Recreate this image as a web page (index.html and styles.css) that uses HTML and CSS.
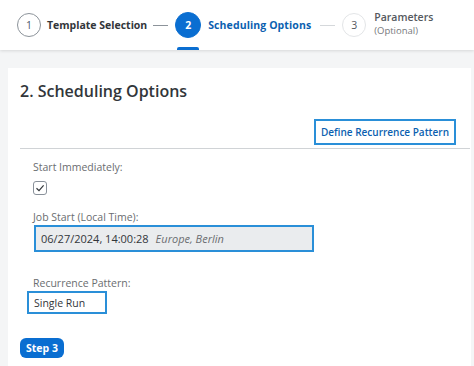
FILE: index.html
```html
<!DOCTYPE html>
<html lang="en">
<head>
    <meta charset="UTF-8">
    <meta name="viewport" content="width=device-width, initial-scale=1.0">
    <title>Scheduling Options</title>
    <link rel="stylesheet" href="styles.css">
</head>
<body>
    <header class="stepper">
        <div class="step done">
            <span class="step-num">1</span>
            <span class="step-title">Template Selection</span>
        </div>
        <span class="step-line"></span>
        <div class="step current">
            <span class="step-num">2</span>
            <span class="step-title">Scheduling Options</span>
        </div>
        <span class="step-line"></span>
        <div class="step todo">
            <span class="step-num">3</span>
            <div class="step-title">
                <span class="step-name">Parameters</span>
                <small class="step-hint">(Optional)</small>
            </div>
        </div>
    </header>

    <main class="page">
        <section class="card">
            <h2 class="card-title">2. Scheduling Options</h2>

            <div class="toolbar">
                <a class="link-btn highlight" href="#">Define Recurrence Pattern</a>
            </div>

            <div class="form">
                <div class="field">
                    <label class="field-label">Start Immediately:</label>
                    <span class="checkbox">
                        <svg width="10" height="10" viewBox="0 0 10 10">
                            <path d="M1.5 5.2 L4 7.6 L8.6 2.4" fill="none" stroke="#32363a" stroke-width="1.2"/>
                        </svg>
                    </span>
                </div>

                <div class="field job-start">
                    <label class="field-label">Job Start (Local Time):</label>
                    <div class="input readonly highlight">
                        <span class="input-value">06/27/2024, 14:00:28</span>
                        <em class="input-zone">Europe, Berlin</em>
                    </div>
                </div>

                <div class="field recurrence">
                    <label class="field-label">Recurrence Pattern:</label>
                    <div class="value-box highlight">Single Run</div>
                </div>
            </div>

            <span class="step-badge">Step 3</span>
        </section>
    </main>
</body>
</html>
```

FILE: styles.css
```css
:root {
    --brand: #0a6ed1;
    --brand-text: #0b5fb0;
    --mark: #2a8fd8;
    --label: #6a6d70;
    --text: #32363a;
    --page-bg: #f4f5f6;
}

* {
    box-sizing: border-box;
}

body {
    margin: 0;
    font-family: 'Open Sans', 'Liberation Sans', sans-serif;
    color: var(--text);
    background: var(--page-bg);
}

/* Wizard header */
.stepper {
    height: 50px;
    background: #fff;
    display: flex;
    align-items: center;
    padding-left: 17px;
    box-shadow: 0 1px 3px rgba(0, 0, 0, 0.12);
    position: relative;
}

.step {
    display: flex;
    align-items: center;
    gap: 6px;
    height: 100%;
    position: relative;
    white-space: nowrap;
}

.step-num {
    width: 24px;
    height: 24px;
    border-radius: 50%;
    border: 1px solid #8c939a;
    display: flex;
    align-items: center;
    justify-content: center;
    font-size: 10.5px;
    color: #4a5a6a;
}

.step-title {
    font-size: 10.5px;
    font-weight: 700;
    color: #32363a;
}

.step-line {
    width: 15px;
    height: 1px;
    background: #8c939a;
    margin: 0 7px 0 6px;
}

.step.current {
    gap: 7px;
}

.step.current .step-num {
    width: 26px;
    height: 26px;
    background: var(--brand);
    border-color: var(--brand);
    color: #fff;
    font-weight: 700;
}

.step.current .step-title {
    color: var(--brand-text);
    letter-spacing: 0.1px;
}

.step.current::after {
    content: '';
    position: absolute;
    left: 2px;
    bottom: 0;
    width: 22px;
    height: 3px;
    background: var(--brand);
    border-radius: 2px 2px 0 0;
}

.step.current + .step-line {
    background: #d5d8db;
    margin: 0 7px 0 9px;
}

.step.todo {
    gap: 8px;
}

.step.todo .step-num {
    border-color: #e3e5e7;
    color: #55595e;
}

.step.todo .step-title {
    display: flex;
    flex-direction: column;
    margin-top: -4px;
}

.step-name {
    color: #55595e;
    font-weight: 600;
    line-height: 14px;
}

.step-hint {
    font-size: 9.5px;
    line-height: 13px;
    font-weight: 400;
    color: #77797c;
}

/* Content card */
.page {
    padding: 18px 3px 0 8px;
}

.card {
    background: #fff;
    padding: 12px 1px 20px 12px;
}

.card-title {
    margin: 0;
    font-size: 16px;
    font-weight: 600;
    color: #32363a;
}

.toolbar {
    display: flex;
    justify-content: flex-end;
    padding: 17px 14px 3px 0;
    border-bottom: 1px solid #d0d3d6;
}

.highlight {
    border: 2.5px solid var(--mark);
}

.link-btn {
    display: inline-block;
    padding: 4px 5px;
    font-size: 10px;
    font-weight: 600;
    line-height: 14px;
    color: var(--brand-text);
    text-decoration: none;
}

.form {
    padding: 10px 0 0 13px;
}

.field {
    display: flex;
    flex-direction: column;
    align-items: flex-start;
    margin-bottom: 11px;
}

.field-label {
    font-size: 10.5px;
    line-height: 16px;
    color: var(--label);
    margin-bottom: 6px;
}

.checkbox {
    width: 14px;
    height: 14px;
    border: 1px solid #89919a;
    border-radius: 3px;
    display: flex;
    align-items: center;
    justify-content: center;
}

.job-start {
    margin-top: 14px;
}

.job-start .field-label {
    margin-bottom: 0;
}

.input {
    width: 280px;
    height: 27px;
    padding: 0 5px;
    display: flex;
    align-items: center;
    gap: 7px;
    font-size: 11px;
    background: #eaecee;
    margin-left: 1px;
}

.input-zone {
    color: #6a6d70;
}

.recurrence {
    margin-top: 23px;
}

.recurrence .field-label {
    margin-bottom: 0;
}

.value-box {
    width: 80px;
    height: 23px;
    padding: 0 5px;
    margin-left: -6px;
    display: flex;
    align-items: center;
    font-size: 10.5px;
}

.step-badge {
    display: inline-block;
    margin-top: 13px;
    padding: 2px 6px;
    background: var(--brand);
    color: #fff;
    font-size: 10.5px;
    line-height: 16px;
    font-weight: 700;
    border-radius: 6px;
}
```
